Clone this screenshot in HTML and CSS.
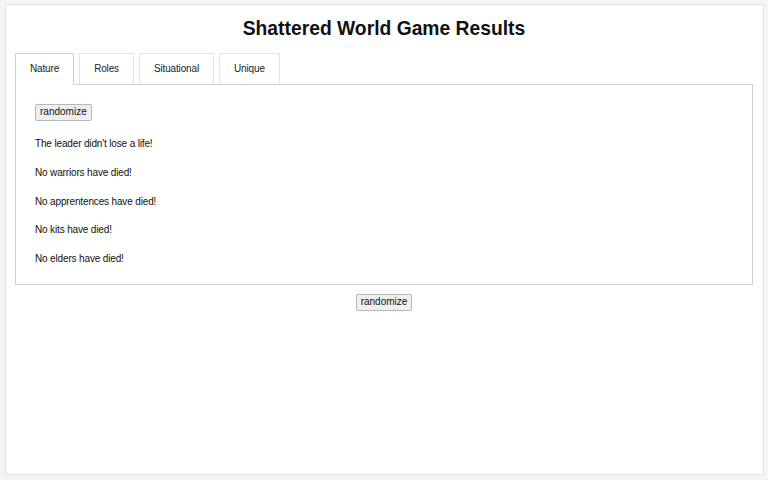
FILE: index.html
```html
<!DOCTYPE html>
<html lang="en">
<head>
  <meta charset="UTF-8">
  <meta name="viewport" content="width=device-width, initial-scale=1.0">
  <title>Shattered World Game Results</title>
  <link rel="stylesheet" href="styles.css">
</head>
<body>
  <div class="page">
    <h1>Shattered World Game Results</h1>

    <ul class="tabs">
      <li class="tab active">Nature</li>
      <li class="tab">Roles</li>
      <li class="tab">Situational</li>
      <li class="tab">Unique</li>
    </ul>

    <div class="panel" id="naturePanel">
      <button class="btn">randomize</button>
      <p>The leader didn't lose a life!</p>
      <p>No warriors have died!</p>
      <p>No apprentences have died!</p>
      <p>No kits have died!</p>
      <p>No elders have died!</p>
    </div>

    <div class="footer">
      <button class="btn">randomize</button>
    </div>
  </div>
</body>
</html>
```
FILE: styles.css
```css
body {
  font-family: "Liberation Sans", Arial, sans-serif;
  background-color: #f4f4f4;
  margin: 0;
  padding: 4px 4px 0 5px;
}
.page {
  background-color: #fff;
  border: 1px solid #e2e2e2;
  height: 471px;
  padding: 0 10px 0 9px;
  box-sizing: border-box;
}
h1 {
  font-size: 19.3px;
  line-height: 22px;
  text-align: center;
  margin: 13px 0 13px;
  color: #111;
}
.tabs {
  list-style: none;
  margin: 0 0 -1px;
  padding: 0;
  display: flex;
  align-items: flex-start;
  gap: 5px;
  height: 32px;
}
.tab {
  font-size: 10px;
  letter-spacing: -0.15px;
  color: #222;
  height: 30px;
  line-height: 30px;
  padding: 0 14px;
  border: 1px solid #e4e4e4;
  border-bottom: none;
  background: #fff;
}
.tab.active {
  height: 31px;
  border-color: #cfcfcf;
  position: relative;
  z-index: 1;
}
.panel {
  border: 1px solid #cfcfcf;
  padding: 19px 19px 19px;
  display: flex;
  flex-direction: column;
  align-items: flex-start;
  gap: 16px;
}
.panel p {
  font-size: 10px;
  letter-spacing: -0.15px;
  line-height: 13px;
  margin: 0;
  color: #111;
}
.panel p + p {
  margin-top: -0.25px;
}
.btn {
  font-family: "Liberation Sans", Arial, sans-serif;
  font-size: 10px;
  color: #111;
  background-color: #efefef;
  border: 1px solid #b8b8b8;
  border-radius: 2px;
  padding: 1px 4px 2px;
  line-height: 12px;
}
.footer {
  display: flex;
  justify-content: center;
  margin-top: 9px;
}
```
